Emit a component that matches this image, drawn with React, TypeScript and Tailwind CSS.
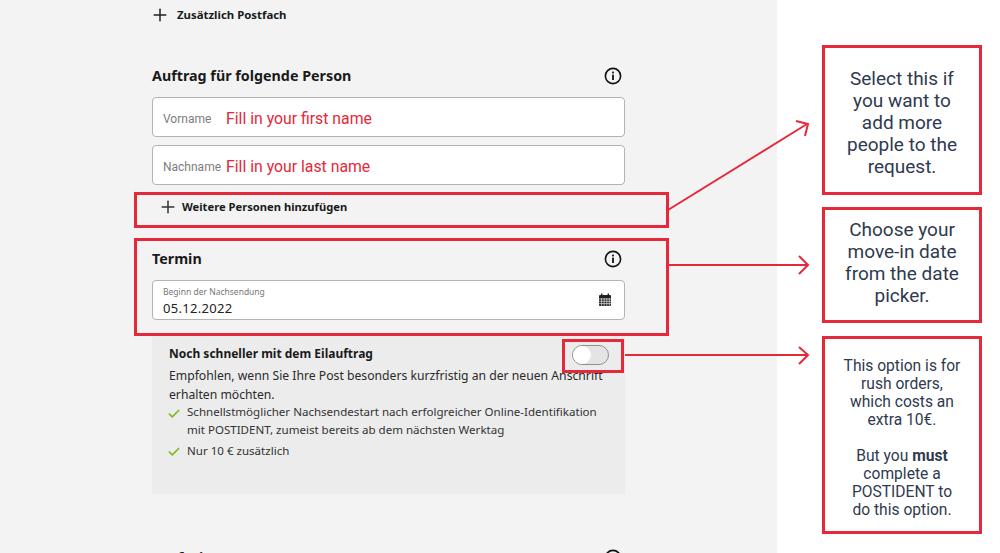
import { Plus, Check } from "lucide-react"

const noto = "font-['Noto_Sans',sans-serif]"
const roboto = "font-['Roboto',sans-serif]"

function InfoIcon() {
  return (
    <svg width="18" height="18" viewBox="0 0 18 18" fill="none" className="mr-[3px] shrink-0">
      <circle cx="9" cy="9" r="7.6" stroke="#111" strokeWidth="1.6" />
      <rect x="8.1" y="7.6" width="1.8" height="5.4" fill="#111" />
      <rect x="8.1" y="4.6" width="1.8" height="1.8" fill="#111" />
    </svg>
  )
}

function CalendarIcon() {
  return (
    <svg width="14" height="14" viewBox="0 0 14 14" className="shrink-0">
      <rect x="1" y="2" width="12" height="11" rx="1" fill="#222" />
      <rect x="3" y="0.5" width="1.4" height="3" fill="#222" />
      <rect x="9.6" y="0.5" width="1.4" height="3" fill="#222" />
      <path d="M1 6h12M1 8.3h12M1 10.6h12M3.6 5v8M6.2 5v8M8.8 5v8M11.3 5v8" stroke="#fff" strokeWidth="0.6" />
    </svg>
  )
}

function NameField({ label, hint, labelPad }: { label: string; hint: string; labelPad: string }) {
  return (
    <div className={`relative flex h-10 items-center rounded-[4px] border border-[#b3b3b3] bg-white pl-[10px] ${labelPad}`}>
      <span className={`${roboto} text-[12px] text-[#7d7d7d]`}>{label}</span>
      <span className={`${roboto} absolute left-[73px] top-[11px] text-[15.8px] leading-[20px] text-[#e5283a]`}>{hint}</span>
    </div>
  )
}

function Callout({ className, children }: { className: string; children: React.ReactNode }) {
  return (
    <div className={`${roboto} absolute flex flex-col items-center border-[3px] border-[#e5283a] bg-white text-center text-[#2f3a4f] ${className}`}>
      {children}
    </div>
  )
}

export default function App() {
  return (
    <div className={`${noto} relative h-[553px] w-[1000px] overflow-hidden bg-white`}>
      <div className="h-[553px] w-[777px] bg-[#f3f3f3] pl-[152px] pr-[152px]">
        <div className="-ml-[2px] flex h-[29px] items-center gap-[7px]">
          <Plus size={20} strokeWidth={1.8} color="#222" />
          <span className="text-[11.4px] font-bold text-[#1a1a1a]">Zusätzlich Postfach</span>
        </div>

        <div className="mt-[37px] flex h-[20px] items-center justify-between">
          <h2 className="text-[14.3px] font-bold text-[#1a1a1a]">Auftrag für folgende Person</h2>
          <InfoIcon />
        </div>
        <div className="mt-[11px] flex flex-col gap-2">
          <NameField label="Vorname" hint="Fill in your first name" labelPad="pt-[4px]" />
          <NameField label="Nachname" hint="Fill in your last name" labelPad="pt-[4px]" />
        </div>
        <div className="mt-[15px] flex h-[14px] items-center gap-[4px] pl-[6px]">
          <Plus size={20} strokeWidth={1.8} color="#333" />
          <span className="text-[11.2px] font-bold text-[#1a1a1a]">Weitere Personen hinzufügen</span>
        </div>

        <div className="mt-[35px] flex h-[20px] items-center justify-between">
          <h2 className="text-[14.3px] font-bold text-[#1a1a1a]">Termin</h2>
          <InfoIcon />
        </div>
        <div className="mt-[11px] flex h-10 items-center justify-between rounded-[4px] border border-[#b3b3b3] bg-white pl-[10px] pr-[12px]">
          <div className="pt-[1px]">
            <div className="text-[8.5px] leading-[11px] text-[#777]">Beginn der Nachsendung</div>
            <div className="mt-[3px] text-[13px] leading-[16px] tracking-[0.3px] text-[#222]">05.12.2022</div>
          </div>
          <CalendarIcon />
        </div>

        <div className="mt-[15px] h-[159px] bg-[#ececec] pl-[17px] pr-[16px] pt-[10px]">
          <div className="flex items-start justify-between">
            <span className="text-[12px] font-bold leading-[18px] text-[#1a1a1a]">Noch schneller mit dem Eilauftrag</span>
            <div className="relative h-[20px] w-[37px] rounded-full border border-[#8f8f8f] bg-[#e4e4e4]">
              <div className="absolute left-0 top-0 h-[18px] w-[18px] rounded-full bg-white" />
            </div>
          </div>
          <p className="mt-[2px] text-[12.2px] leading-[18.5px] text-[#2a2a2a]">
            Empfohlen, wenn Sie Ihre Post besonders kurzfristig an der neuen Anschrift erhalten möchten.
          </p>
          <ul className="mt-[-1px] text-[11.55px] leading-[17.5px] text-[#333]">
            <li className="flex gap-[6px]">
              <Check size={14} strokeWidth={3} color="#85b81e" className="-ml-[2px] mt-[4px] shrink-0" />
              <span>Schnellstmöglicher Nachsendestart nach erfolgreicher Online-Identifikation mit POSTIDENT, zumeist bereits ab dem nächsten Werktag</span>
            </li>
            <li className="mt-[4px] flex gap-[6px]">
              <Check size={14} strokeWidth={3} color="#85b81e" className="-ml-[2px] mt-[3px] shrink-0" />
              <span>Nur 10 € zusätzlich</span>
            </li>
          </ul>
        </div>

        <div className="mt-[54px] flex h-[20px] items-center justify-between">
          <h2 className="text-[14.3px] font-bold text-[#1a1a1a]">Laufzeit</h2>
          <InfoIcon />
        </div>
      </div>

      {/* annotation overlay */}
      <div className="absolute left-[134px] top-[192px] h-[36px] w-[535px] border-[3px] border-[#e5283a]" />
      <div className="absolute left-[134px] top-[238px] h-[98px] w-[535px] border-[3px] border-[#e5283a]" />
      <div className="absolute left-[562px] top-[339px] h-[34px] w-[62px] border-[3px] border-[#e5283a]" />

      <svg width="1000" height="553" viewBox="0 0 1000 553" fill="none" className="absolute left-0 top-0" stroke="#e5283a" strokeWidth="2">
        <path d="M668 210L807 124" />
        <path d="M796 121L808 124L805 136" />
        <path d="M669 265H808" />
        <path d="M799 256L808 265L799 274" />
        <path d="M625 355H808" />
        <path d="M799 347L808 355L799 364" />
      </svg>

      <Callout className="left-[822px] top-[45px] h-[150px] w-[160px] pt-[20px] text-[19px] leading-[22px]">
        <span>Select this if</span>
        <span>you want to</span>
        <span>add more</span>
        <span>people to the</span>
        <span>request.</span>
      </Callout>
      <Callout className="left-[822px] top-[207px] h-[116px] w-[160px] pt-[9px] text-[19px] leading-[22px]">
        <span>Choose your</span>
        <span>move-in date</span>
        <span>from the date</span>
        <span>picker.</span>
      </Callout>
      <Callout className="left-[822px] top-[336px] h-[198px] w-[160px] pt-[18px] text-[15.6px] leading-[18px]">
        <span>This option is for</span>
        <span>rush orders,</span>
        <span>which costs an</span>
        <span>extra 10€.</span>
        <span className="h-[18px]" />
        <span>But you <b className="font-bold">must</b></span>
        <span>complete a</span>
        <span>POSTIDENT to</span>
        <span>do this option.</span>
      </Callout>
    </div>
  )
}
